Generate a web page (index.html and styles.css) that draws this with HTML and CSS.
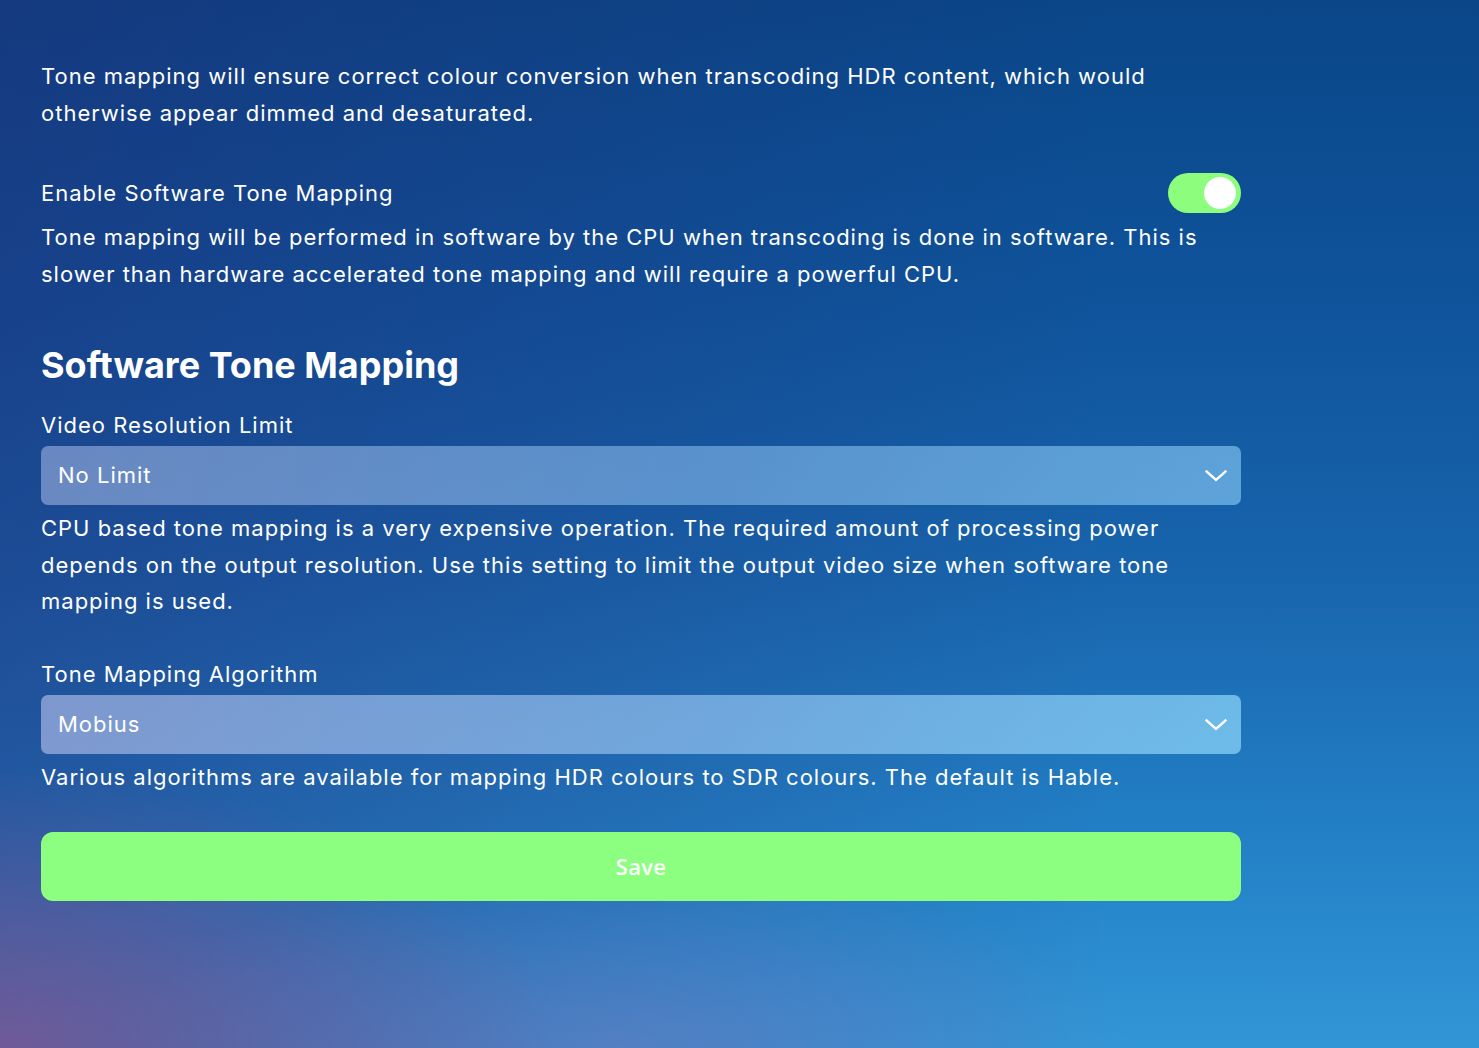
FILE: index.html
```html
<!DOCTYPE html>
<html lang="en">
<head>
<meta charset="utf-8">
<title>Tone Mapping</title>
<link rel="stylesheet" href="styles.css">
</head>
<body>
<main class="page">
  <p class="desc intro">Tone mapping will ensure correct colour conversion when transcoding HDR content, which would otherwise appear dimmed and desaturated.</p>

  <div class="toggle-row">
    <span class="label">Enable Software Tone Mapping</span>
    <span class="switch"><span class="knob"></span></span>
  </div>
  <p class="desc after-toggle">Tone mapping will be performed in software by the CPU when transcoding is done in software. This is slower than hardware accelerated tone mapping and will require a powerful CPU.</p>

  <h2 class="heading">Software Tone Mapping</h2>

  <div class="field">
    <div class="label">Video Resolution Limit</div>
    <div class="select select-a">
      <span>No Limit</span>
      <svg class="chev" width="22" height="12" viewBox="0 0 22 12"><path d="M1.5 1.5 L11 10 L20.5 1.5" fill="none" stroke="#fff" stroke-width="2.4" stroke-linecap="square"/></svg>
    </div>
    <p class="desc">CPU based tone mapping is a very expensive operation. The required amount of processing power depends on the output resolution. Use this setting to limit the output video size when software tone mapping is used.</p>
  </div>

  <div class="field field-2">
    <div class="label">Tone Mapping Algorithm</div>
    <div class="select select-b">
      <span>Mobius</span>
      <svg class="chev" width="22" height="12" viewBox="0 0 22 12"><path d="M1.5 1.5 L11 10 L20.5 1.5" fill="none" stroke="#fff" stroke-width="2.4" stroke-linecap="square"/></svg>
    </div>
    <p class="desc">Various algorithms are available for mapping HDR colours to SDR colours. The default is Hable.</p>
  </div>

  <button class="save" type="button">Save</button>
</main>
</body>
</html>
```

FILE: styles.css
```css
html, body {
  margin: 0;
  padding: 0;
}

body {
  min-height: 1048px;
  color: #ffffff;
  font-family: Inter, "Noto Sans", sans-serif;
  font-size: 22px;
  line-height: 36.5px;
  letter-spacing: 1px;
  background:
    radial-gradient(ellipse 560px 280px at 0% 100%, rgba(135, 85, 145, 0.75), rgba(135, 85, 145, 0) 100%),
    radial-gradient(ellipse 520px 180px at 42% 100%, rgba(120, 125, 195, 0.5), rgba(120, 125, 195, 0) 100%),
    linear-gradient(90deg, rgba(35, 40, 115, 0.42) 0%, rgba(35, 40, 115, 0.2) 40%, rgba(35, 40, 115, 0) 75%),
    linear-gradient(180deg, #0a4688 0%, #0f549c 30%, #1865ad 55%, #2380c6 80%, #3196d6 100%);
  overflow: hidden;
}

.page {
  width: 1200px;
  padding: 58px 0 0 41px;
}

.desc {
  margin: 0;
}

.label {
  display: block;
}

.toggle-row {
  margin-top: 42px;
  height: 40px;
  display: flex;
  align-items: center;
  justify-content: space-between;
}

.switch {
  width: 73px;
  height: 40px;
  border-radius: 20px;
  background: #8cfd7d;
  display: flex;
  align-items: center;
  justify-content: flex-end;
  padding-right: 5px;
  box-sizing: border-box;
}

.knob {
  width: 32px;
  height: 32px;
  border-radius: 50%;
  background: #ffffff;
}

.after-toggle {
  margin-top: 6px;
}

.heading {
  margin: 51px 0 0;
  font-size: 36px;
  line-height: 44px;
  font-weight: 700;
  letter-spacing: 0;
}

.field {
  margin-top: 20px;
}

.field-2 {
  margin-top: 36.5px;
}

.select {
  margin-top: 2.5px;
  height: 59px;
  border-radius: 7px;
  display: flex;
  align-items: center;
  justify-content: space-between;
  padding: 0 14px 0 17px;
  box-sizing: border-box;
}

.select-a {
  background: linear-gradient(90deg, rgba(185, 200, 240, 0.5) 0%, rgba(155, 205, 250, 0.5) 55%, rgba(150, 215, 255, 0.56) 100%);
}

.select-b {
  background: linear-gradient(90deg, rgba(200, 205, 245, 0.56) 0%, rgba(170, 212, 252, 0.58) 55%, rgba(150, 222, 255, 0.66) 100%);
}

.select + .desc {
  margin-top: 5px;
}

.chev {
  display: block;
}

.save {
  display: block;
  margin-top: 36px;
  width: 1200px;
  height: 69px;
  border: none;
  border-radius: 12px;
  background: #8cff80;
  color: #ffffff;
  font-family: "Open Sans", sans-serif;
  font-size: 22px;
  font-weight: 600;
  letter-spacing: 0.3px;
  padding: 0;
}
```
